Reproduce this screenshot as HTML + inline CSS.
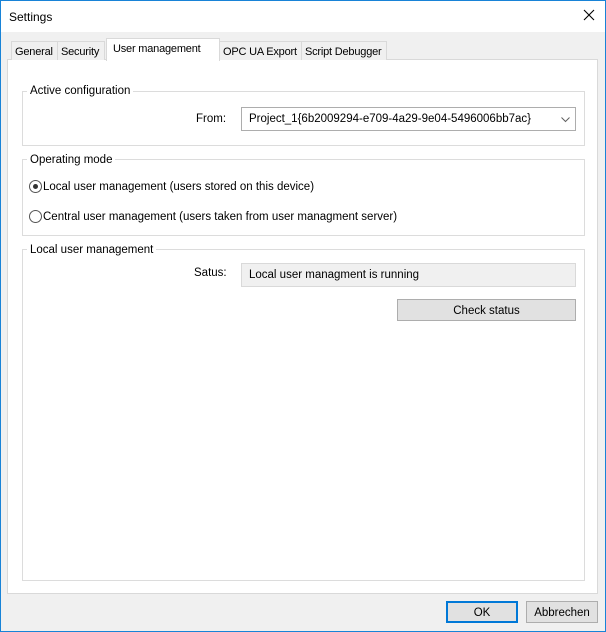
<!DOCTYPE html>
<html><head><style>
*{margin:0;padding:0;box-sizing:border-box}
body{width:606px;height:632px;overflow:hidden;font-family:"Liberation Sans",sans-serif;font-size:11.5px;color:#000;background:#f0f0f0;position:relative}
.a{position:absolute}
.win{left:0;top:0;width:606px;height:632px;border:1px solid #1883d7;background:#f0f0f0}
.title{left:1px;top:1px;width:604px;height:31px;background:#fff}
.tab{position:absolute;top:41px;height:19px;border:1px solid #d9d9d9;border-bottom:none;background:#f0f0f0;padding:4px 0 0 3px;white-space:nowrap;font-size:11px;letter-spacing:-0.2px}
.panel{left:7px;top:59px;width:591px;height:535px;background:#fff;border:1px solid #d9d9d9}
.grp{position:absolute;border:1px solid #dcdcdc;left:22px;width:563px}
.gl{position:absolute;background:#fff;padding:0 3px;left:27px;white-space:nowrap}
.btn{position:absolute;background:#e1e1e1;border:1px solid #adadad;text-align:center}
.radio{position:absolute;width:13px;height:13px;border:1px solid #555;border-radius:50%;background:#fff}
</style></head><body>
<div class="a win"></div>
<div class="a title"></div>
<div class="a" style="left:9px;top:10px;font-size:12px">Settings</div>
<svg class="a" style="left:583px;top:9px" width="12" height="12"><path d="M1 1L11 11M11 1L1 11" stroke="#000" stroke-width="1.1"/></svg>
<div class="a panel"></div>
<div class="tab" style="left:11px;width:47px">General</div>
<div class="tab" style="left:57px;width:48px">Security</div>
<div class="tab" style="left:301px;width:86px">Script Debugger</div>
<div class="tab" style="left:219px;width:83px">OPC UA Export</div>
<div class="tab" style="left:106px;width:114px;top:38px;height:23px;background:#fff;padding:4px 0 0 6px">User management</div>

<div class="grp" style="top:91px;height:55px"></div>
<div class="gl" style="top:85px">Active configuration</div>
<div class="a" style="left:196px;top:113px">From:</div>
<div class="a" style="left:241px;top:107px;width:335px;height:24px;border:1px solid #adadad;background:#fff;padding:5px 0 0 7px;white-space:nowrap">Project_1{6b2009294-e709-4a29-9e04-5496006bb7ac}</div>
<svg class="a" style="left:561px;top:117px" width="9" height="6"><path d="M0.5 0.5L4.5 4.5L8.5 0.5" stroke="#606060" fill="none"/></svg>

<div class="grp" style="top:159px;height:77px"></div>
<div class="gl" style="top:154px">Operating mode</div>
<div class="radio" style="left:29px;top:180px"></div>
<div class="a" style="left:33px;top:184px;width:5px;height:5px;border-radius:50%;background:#333"></div>
<div class="a" style="left:43px;top:181px">Local user management (users stored on this device)</div>
<div class="radio" style="left:29px;top:210px"></div>
<div class="a" style="left:43px;top:211px">Central user management (users taken from user managment server)</div>

<div class="grp" style="top:249px;height:332px"></div>
<div class="gl" style="top:244px">Local user management</div>
<div class="a" style="left:194px;top:267px">Satus:</div>
<div class="a" style="left:241px;top:263px;width:335px;height:24px;border:1px solid #d9d9d9;background:#f0f0f0;padding:5px 0 0 7px">Local user managment is running</div>
<div class="btn" style="left:397px;top:299px;width:179px;height:22px;padding-top:5px">Check status</div>

<div class="btn" style="left:446px;top:601px;width:72px;height:22px;border:2px solid #0078d7;padding-top:4px">OK</div>
<div class="btn" style="left:526px;top:601px;width:72px;height:22px;padding-top:5px">Abbrechen</div>
</body></html>
